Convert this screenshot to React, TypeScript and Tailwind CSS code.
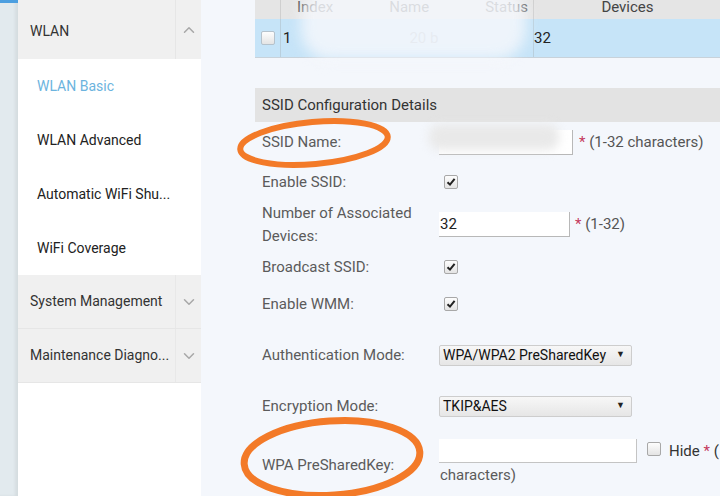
import { ChevronDown, ChevronUp } from 'lucide-react'

const font = { fontFamily: 'Roboto, "Liberation Sans", sans-serif' }

function Check({ checked = false, className = '' }: { checked?: boolean; className?: string }) {
  return (
    <span
      className={`flex h-[14px] w-[14px] items-center justify-center rounded-[2px] border border-[#a8a8a8] bg-gradient-to-b from-[#fdfdfd] to-[#e4e4e4] ${className}`}
    >
      {checked && (
        <svg width="10" height="10" viewBox="0 0 10 10">
          <path d="M1.5 5.2 L4 7.6 L8.6 1.8" fill="none" stroke="#222" strokeWidth="2" />
        </svg>
      )}
    </span>
  )
}

function Select({ value }: { value: string }) {
  return (
    <div className="flex h-[21px] w-[193px] items-center justify-between rounded-[2px] border border-[#cdcdcd] bg-gradient-to-b from-[#f7f7f7] to-[#e6e6e6] pl-[3px] pr-[6px] text-[14px] text-[#111]">
      <span>{value}</span>
      <span className="text-[9px] text-[#222]">▼</span>
    </div>
  )
}

function Row({ label, h, children }: { label: React.ReactNode; h: string; children?: React.ReactNode }) {
  return (
    <div className={`flex items-center ${h}`}>
      <div className="w-[184px] shrink-0 pl-[7px] text-[15px] leading-[23px] text-[#5b5b5b]">{label}</div>
      <div className="flex-1">{children}</div>
    </div>
  )
}

const Req = () => <span className="text-[#c4395c]">*</span>

export default function App() {
  return (
    <div className="relative flex h-[496px] w-[720px] overflow-hidden bg-[#f4f7fc]" style={font}>
      {/* left rail */}
      <div className="w-[18px] shrink-0 bg-[#e2eaee] shadow-[inset_-3px_0_3px_rgba(0,0,0,0.06)]">
        <div className="h-[3px] bg-[#4c9fe0]" />
      </div>

      {/* sidebar */}
      <aside className="w-[183px] shrink-0 bg-white">
        <div className="flex h-[59px] bg-[#f0f0f0]">
          <div className="flex flex-1 items-center pl-[12px] pt-[3px] text-[14px] text-[#333]">WLAN</div>
          <div className="flex w-[26px] items-center justify-center border-l border-[#e6e6e6]">
            <ChevronUp size={18} strokeWidth={2} className="text-[#a8a8a8]" />
          </div>
        </div>
        {['WLAN Basic', 'WLAN Advanced', 'Automatic WiFi Shu...', 'WiFi Coverage'].map((t, i) => (
          <div
            key={t}
            className={`flex h-[54px] items-center pl-[19px] text-[14px] ${i === 0 ? 'text-[#6cb4de]' : 'text-[#222]'}`}
          >
            {t}
          </div>
        ))}
        {['System Management', 'Maintenance Diagno...'].map((t) => (
          <div key={t} className="flex h-[54px] border-b border-[#e6e6e6] bg-[#f0f0f0]">
            <div className="flex flex-1 items-center pl-[12px] text-[14px] text-[#333]">{t}</div>
            <div className="flex w-[26px] items-center justify-center border-l border-[#e8e8e8]">
              <ChevronDown size={18} strokeWidth={2} className="text-[#a8a8a8]" />
            </div>
          </div>
        ))}
      </aside>

      {/* main */}
      <main className="relative flex-1 pl-[54px]">
        {/* table */}
        <div className="-mt-[5px] w-[466px] border-b border-[#c8d2da]">
          <div className="flex h-[24px] bg-[#e5e5e5] text-[15px] text-[#444]">
            <div className="w-[26px] border-r border-[#cfcfcf]" />
            <div className="flex flex-1 items-center gap-[56px] pl-[16px]">
              <span>Index</span>
              <span>Name</span>
              <span>Status</span>
            </div>
            <div className="flex w-[188px] items-center justify-center border-l border-[#cfcfcf]">Devices</div>
          </div>
          <div className="flex h-[38px] bg-[#c6e4f8] text-[15px] text-[#222]">
            <div className="flex w-[26px] items-center justify-center border-r border-[#b9cfdd]">
              <Check className="border-[#b5c2cc] from-[#e9eef2] to-[#dbe3e9]" />
            </div>
            <div className="flex flex-1 items-center pl-[2px]">
              <span>1</span>
              <span className="ml-[118px] text-[#9aa8b4]">20 b</span>
            </div>
            <div className="flex w-[188px] items-center border-l border-[#b9cfdd]">32</div>
          </div>
        </div>
        {/* redaction blur over table */}
        <div className="absolute left-[100px] top-[-14px] h-[74px] w-[225px] rounded-[30px] bg-[#f4f7fc]/85 blur-[7px]" />

        {/* section */}
        <div className="mt-[30px] flex h-[34px] w-[470px] items-center bg-[#e3e3e3] pl-[7px] text-[15px] text-[#333]">
          SSID Configuration Details
        </div>

        <Row label="SSID Name:" h="h-[40px]">
          <div className="flex items-center gap-[6px] text-[15px] text-[#555]">
            <div className="relative h-[25px] w-[134px] border-b border-r border-[#b8b8b8] bg-white">
              <div className="absolute left-[-10px] top-[-6px] h-[26px] w-[130px] rounded-[10px] bg-[#e9e9e9] blur-[5px]" />
            </div>
            <span>
              <Req /> (1-32 characters)
            </span>
          </div>
        </Row>
        <Row label="Enable SSID:" h="h-[40px]">
          <Check checked className="ml-[5px]" />
        </Row>
        <Row
          label={
            <>
              Number of Associated
              <br />
              Devices:
            </>
          }
          h="h-[45px]"
        >
          <div className="flex items-center gap-[5px] text-[15px] text-[#555]">
            <div className="flex h-[25px] w-[131px] items-center border-b border-r border-[#b8b8b8] bg-white pl-[1px] text-[#222]">
              32
            </div>
            <span>
              <Req /> (1-32)
            </span>
          </div>
        </Row>
        <Row label="Broadcast SSID:" h="h-[40px]">
          <Check checked className="ml-[5px]" />
        </Row>
        <Row label="Enable WMM:" h="h-[34px]">
          <Check checked className="ml-[5px]" />
        </Row>
        <Row label="Authentication Mode:" h="h-[68px]">
          <Select value="WPA/WPA2 PreSharedKey" />
        </Row>
        <Row label="Encryption Mode:" h="h-[34px]">
          <Select value="TKIP&AES" />
        </Row>
        <div className="mt-[16px] flex">
          <div className="w-[184px] shrink-0 pl-[7px] pt-[15px] text-[15px] text-[#5b5b5b]">WPA PreSharedKey:</div>
          <div className="flex-1 text-[15px] text-[#5b5b5b]">
            <div className="flex items-center whitespace-nowrap">
              <div className="h-[24px] w-[198px] border-b border-r border-[#c4c4c4] bg-white" />
              <Check className="ml-[10px] -mt-[4px]" />
              <span className="ml-[8px] text-[#333]">
                Hide <Req /> (
              </span>
            </div>
            <div className="mt-[1px] pl-[1px]">characters)</div>
          </div>
        </div>
      </main>

      {/* annotation marks */}
      <svg className="pointer-events-none absolute left-0 top-0" width="720" height="496">
        <ellipse cx="314" cy="143" rx="74" ry="21" fill="none" stroke="#f37a28" strokeWidth="6" transform="rotate(-5 314 143)" />
        <ellipse cx="332" cy="458" rx="88" ry="37" fill="none" stroke="#f37a28" strokeWidth="7" transform="rotate(-4 332 458)" />
      </svg>
    </div>
  )
}
